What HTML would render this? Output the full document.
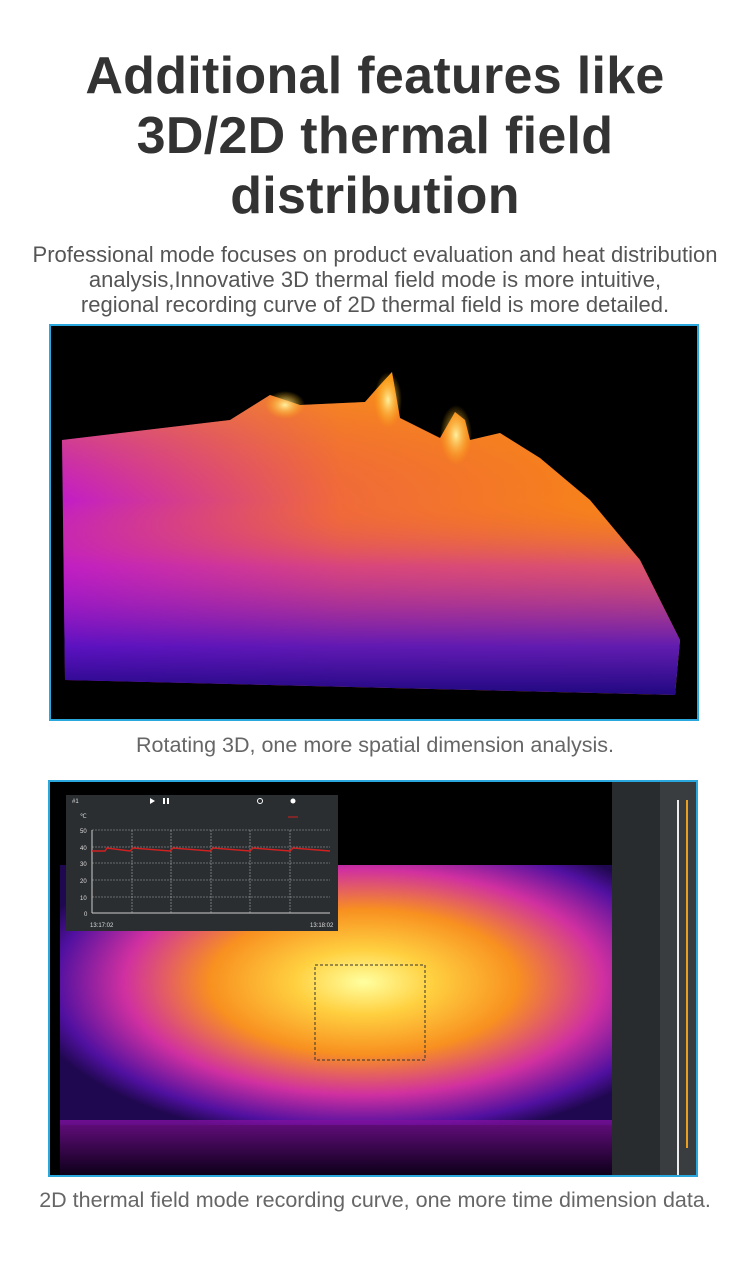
<!DOCTYPE html>
<html><head><meta charset="utf-8"><style>
*{margin:0;padding:0;box-sizing:border-box}
body{width:750px;height:1268px;background:#fff;font-family:"Liberation Sans",sans-serif;position:relative;overflow:hidden}
.t{position:absolute;left:0;width:750px;text-align:center;font-weight:bold;font-size:52px;color:#333;line-height:60px;top:46px;letter-spacing:0.3px}
.s{position:absolute;left:0;width:750px;text-align:center;font-size:22px;color:#555;line-height:25px;top:242px;white-space:nowrap}
.c{position:absolute;left:0;width:750px;text-align:center;font-size:21.5px;color:#666;white-space:nowrap}
.box{position:absolute;border:2px solid #2aa8de;background:#000;overflow:hidden}
</style></head><body>
<div class="t">Additional features like<br>3D/2D thermal field<br>distribution</div>
<div class="s">Professional mode focuses on product evaluation and heat distribution<br>analysis,Innovative 3D thermal field mode is more intuitive,<br>regional recording curve of 2D thermal field is more detailed.</div>
<div class="box" style="left:49px;top:324px;width:650px;height:397px">
<svg width="646" height="393" viewBox="51 326 646 393">
<defs>
<linearGradient id="h" x1="0" y1="0" x2="1" y2="0"><stop offset="0" stop-color="#c21cc8"/><stop offset="0.45" stop-color="#f06a3a"/><stop offset="1" stop-color="#f98a10"/></linearGradient>
<linearGradient id="v" x1="0" y1="0" x2="0" y2="1"><stop offset="0" stop-color="#ffb000" stop-opacity="0.6"/><stop offset="0.4" stop-color="#f07020" stop-opacity="0"/><stop offset="0.6" stop-color="#c020c0" stop-opacity="0.5"/><stop offset="0.85" stop-color="#5010c0" stop-opacity="0.9"/><stop offset="1" stop-color="#200880"/></linearGradient>
<radialGradient id="p"><stop offset="0" stop-color="#fff0a0"/><stop offset="1" stop-color="#ffb000" stop-opacity="0"/></radialGradient>
</defs>
<polygon points="62,440 230,420 270,395 300,405 365,402 380,385 392,372 400,418 440,438 455,412 465,420 470,440 500,433 540,458 590,500 640,560 680,640 675,695 65,680" fill="url(#h)"/>
<polygon points="62,440 230,420 270,395 300,405 365,402 380,385 392,372 400,418 440,438 455,412 465,420 470,440 500,433 540,458 590,500 640,560 680,640 675,695 65,680" fill="url(#v)"/>
<ellipse cx="388" cy="400" rx="14" ry="28" fill="url(#p)"/>
<ellipse cx="456" cy="435" rx="16" ry="30" fill="url(#p)"/>
<ellipse cx="285" cy="405" rx="20" ry="14" fill="url(#p)"/>
</svg>
</div>
<div class="c" style="top:733px">Rotating 3D, one more spatial dimension analysis.</div>
<div class="box" style="left:48px;top:780px;width:650px;height:397px">
<svg width="646" height="393" viewBox="50 782 646 393">
<defs>
<radialGradient id="b" cx="0.55" cy="0.45" r="0.62"><stop offset="0" stop-color="#ffffa0"/><stop offset="0.2" stop-color="#ffd040"/><stop offset="0.45" stop-color="#f89020"/><stop offset="0.7" stop-color="#d030a0"/><stop offset="0.9" stop-color="#5010a0"/><stop offset="1" stop-color="#200850"/></radialGradient>
<linearGradient id="d" x1="0" y1="0" x2="0" y2="1"><stop offset="0" stop-color="#8010a0"/><stop offset="1" stop-color="#100020"/></linearGradient>
</defs>
<rect x="60" y="865" width="552" height="260" fill="url(#b)"/>
<rect x="60" y="1120" width="552" height="55" fill="url(#d)" opacity="0.8"/>
<rect x="315" y="965" width="110" height="95" fill="none" stroke="#333" stroke-dasharray="3,2"/>
<rect x="612" y="782" width="48" height="393" fill="#282c2e"/>
<rect x="660" y="782" width="36" height="393" fill="#3a3d40"/>
<line x1="678" y1="800" x2="678" y2="1175" stroke="#eee" stroke-width="2"/>
<line x1="687" y1="800" x2="687" y2="1148" stroke="#e8a020" stroke-width="2"/>
<rect x="66" y="795" width="272" height="136" fill="#2b2e31"/>
<g stroke="#aaa" stroke-width="0.6" stroke-dasharray="2,1">
<line x1="92" y1="830" x2="330" y2="830"/><line x1="92" y1="847" x2="330" y2="847"/><line x1="92" y1="863" x2="330" y2="863"/><line x1="92" y1="880" x2="330" y2="880"/><line x1="92" y1="897" x2="330" y2="897"/>
<line x1="132" y1="830" x2="132" y2="913"/><line x1="171" y1="830" x2="171" y2="913"/><line x1="211" y1="830" x2="211" y2="913"/><line x1="250" y1="830" x2="250" y2="913"/><line x1="290" y1="830" x2="290" y2="913"/>
</g>
<line x1="92" y1="913" x2="330" y2="913" stroke="#ccc"/><line x1="92" y1="830" x2="92" y2="913" stroke="#ccc"/>
<polyline points="92,851 105,851 107,848 130,851 133,848 170,851 173,848 210,851 213,848 250,851 253,848 290,851 293,848 330,851" fill="none" stroke="#d02020" stroke-width="1.5"/>
<g fill="#ddd" font-size="6" font-family="Liberation Sans"><text x="80" y="833">50</text><text x="80" y="850">40</text><text x="80" y="866">30</text><text x="80" y="883">20</text><text x="80" y="900">10</text><text x="84" y="916">0</text><text x="90" y="927">13:17:02</text><text x="310" y="927">13:18:02</text><text x="72" y="803">#1</text><text x="80" y="818">℃</text></g>
<polygon points="150,798 150,804 155,801" fill="#fff"/><rect x="163" y="798" width="2" height="6" fill="#fff"/><rect x="167" y="798" width="2" height="6" fill="#fff"/>
<circle cx="260" cy="801" r="2.5" fill="none" stroke="#fff"/><circle cx="293" cy="801" r="2.5" fill="#fff"/>
<line x1="288" y1="817" x2="298" y2="817" stroke="#d02020"/>
</svg>
</div>
<div class="c" style="top:1188px">2D thermal field mode recording curve, one more time dimension data.</div>
</body></html>
